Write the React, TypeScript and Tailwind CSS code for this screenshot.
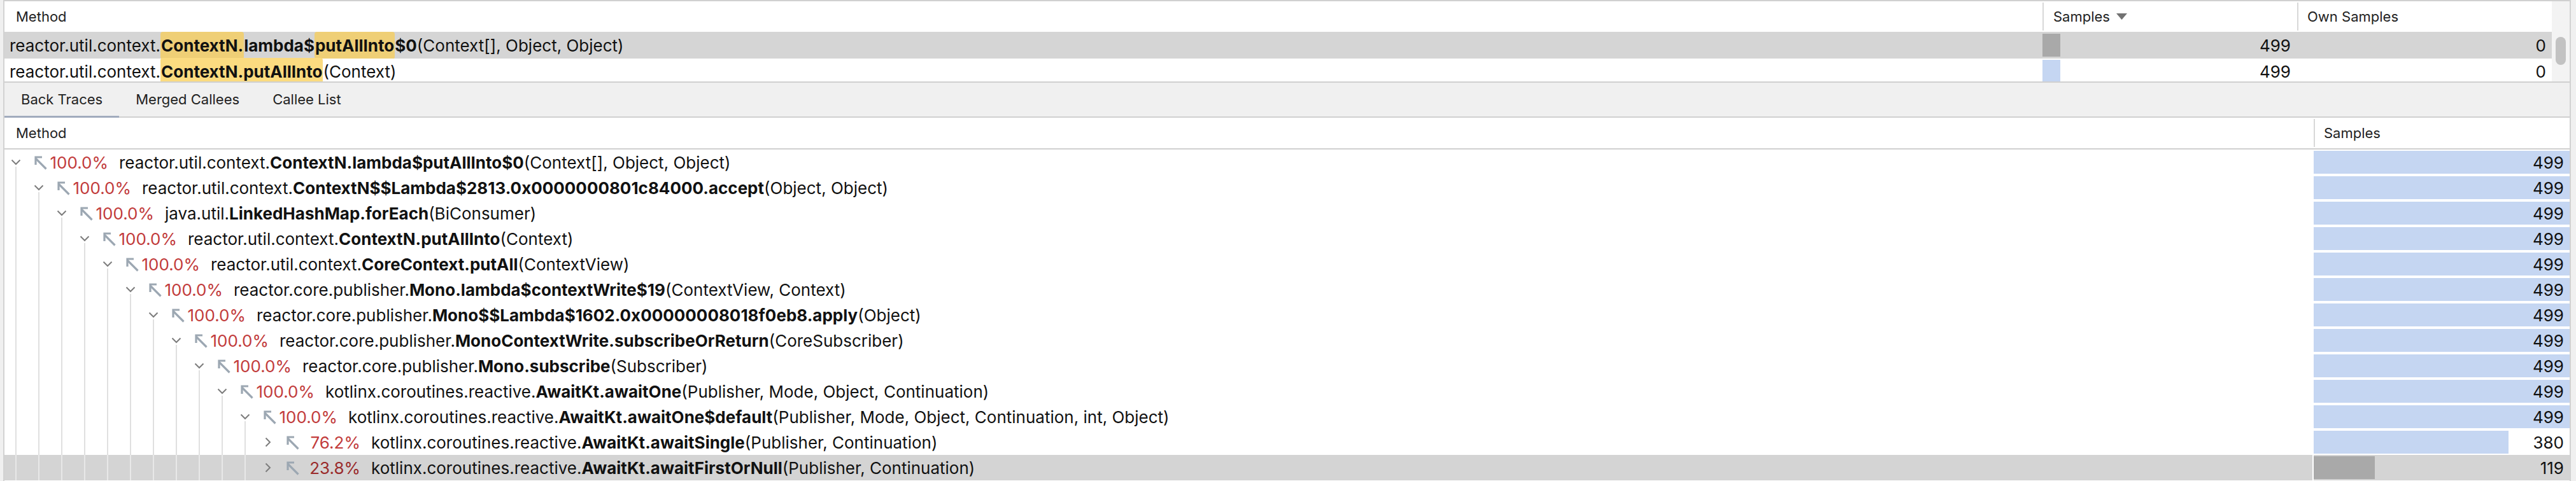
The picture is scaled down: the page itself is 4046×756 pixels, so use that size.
import React from "react";

type TraceRow = {
  level: number;
  expanded: boolean;
  pct: string;
  pkg: string;
  method: string;
  args: string;
  samples: number;
  selected?: boolean;
};

const TOTAL = 499;

const traces: TraceRow[] = [
  { level: 0, expanded: true, pct: "100.0%", pkg: "reactor.util.context.", method: "ContextN.lambda$putAllInto$0", args: "(Context[], Object, Object)", samples: 499 },
  { level: 1, expanded: true, pct: "100.0%", pkg: "reactor.util.context.", method: "ContextN$$Lambda$2813.0x0000000801c84000.accept", args: "(Object, Object)", samples: 499 },
  { level: 2, expanded: true, pct: "100.0%", pkg: "java.util.", method: "LinkedHashMap.forEach", args: "(BiConsumer)", samples: 499 },
  { level: 3, expanded: true, pct: "100.0%", pkg: "reactor.util.context.", method: "ContextN.putAllInto", args: "(Context)", samples: 499 },
  { level: 4, expanded: true, pct: "100.0%", pkg: "reactor.util.context.", method: "CoreContext.putAll", args: "(ContextView)", samples: 499 },
  { level: 5, expanded: true, pct: "100.0%", pkg: "reactor.core.publisher.", method: "Mono.lambda$contextWrite$19", args: "(ContextView, Context)", samples: 499 },
  { level: 6, expanded: true, pct: "100.0%", pkg: "reactor.core.publisher.", method: "Mono$$Lambda$1602.0x00000008018f0eb8.apply", args: "(Object)", samples: 499 },
  { level: 7, expanded: true, pct: "100.0%", pkg: "reactor.core.publisher.", method: "MonoContextWrite.subscribeOrReturn", args: "(CoreSubscriber)", samples: 499 },
  { level: 8, expanded: true, pct: "100.0%", pkg: "reactor.core.publisher.", method: "Mono.subscribe", args: "(Subscriber)", samples: 499 },
  { level: 9, expanded: true, pct: "100.0%", pkg: "kotlinx.coroutines.reactive.", method: "AwaitKt.awaitOne", args: "(Publisher, Mode, Object, Continuation)", samples: 499 },
  { level: 10, expanded: true, pct: "100.0%", pkg: "kotlinx.coroutines.reactive.", method: "AwaitKt.awaitOne$default", args: "(Publisher, Mode, Object, Continuation, int, Object)", samples: 499 },
  { level: 11, expanded: false, pct: "76.2%", pkg: "kotlinx.coroutines.reactive.", method: "AwaitKt.awaitSingle", args: "(Publisher, Continuation)", samples: 380 },
  { level: 11, expanded: false, pct: "23.8%", pkg: "kotlinx.coroutines.reactive.", method: "AwaitKt.awaitFirstOrNull", args: "(Publisher, Continuation)", samples: 119, selected: true },
];

function Chevron({ expanded }: { expanded: boolean }) {
  if (expanded) {
    return (
      <svg width="16" height="10" viewBox="0 0 16 10">
        <path d="M1.5 1.5 L8 8 L14.5 1.5" fill="none" stroke="#7d7d7d" strokeWidth="2" />
      </svg>
    );
  }
  return (
    <svg width="10" height="16" viewBox="0 0 10 16">
      <path d="M1.5 1.5 L8 8 L1.5 14.5" fill="none" stroke="#7d7d7d" strokeWidth="2" />
    </svg>
  );
}

function BackArrow() {
  return (
    <svg width="21" height="23" viewBox="0 0 21 23">
      <path d="M19.5 21.5 L3.5 5.5" fill="none" stroke="#9ca7b2" strokeWidth="3.2" />
      <path d="M3 15 V3 H13" fill="none" stroke="#9ca7b2" strokeWidth="3.2" />
    </svg>
  );
}

function TreeRow({ row }: { row: TraceRow }) {
  const guides = Array.from({ length: row.level });
  return (
    <div className={`flex h-[40px] ${row.selected ? "bg-[#d4d4d4]" : "bg-white"}`}>
      <div className="flex flex-1 items-stretch min-w-0">
        {guides.map((_, i) => (
          <div key={i} className="w-[36px] shrink-0 flex justify-center">
            <div className={`w-[2px] h-full ${row.selected ? "bg-[#e8e8e8]" : "bg-[#e0e0e0]"}`} />
          </div>
        ))}
        <div className="w-[36px] shrink-0 flex flex-col items-center">
          <div className="flex-1" />
          <Chevron expanded={row.expanded} />
          <div className="flex-1 flex justify-center">
            {row.expanded && <div className="w-[2px] h-[13px] mt-[auto] bg-[#e0e0e0]" />}
          </div>
        </div>
        <div className="ml-[10px] flex items-center">
          <BackArrow />
        </div>
        <div
          className={`w-[96px] shrink-0 flex items-center justify-end text-[26px] ${
            row.selected ? "text-[#9a2b2b]" : "text-[#c23b3b]"
          }`}
        >
          {row.pct}
        </div>
        <div className="ml-[17px] flex items-center whitespace-nowrap text-[26px] text-[#111]">
          <span>{row.pkg}</span>
          <span className="font-bold">{row.method}</span>
          <span>{row.args}</span>
        </div>
      </div>
      <div className="relative w-[404px] shrink-0 border-l-2 border-white flex items-center justify-end pr-[9px]">
        <div
          className={`absolute left-0 top-[2px] bottom-[2px] ${row.selected ? "bg-[#a9a9a9]" : "bg-[#c5d6f2]"}`}
          style={{ width: `${(402 * row.samples) / TOTAL}px` }}
        />
        <span className="relative text-[26px] text-[#111]">{row.samples}</span>
      </div>
    </div>
  );
}

export default function App() {
  return (
    <div className="w-[4046px] h-[756px] overflow-hidden bg-[#f0f0f0] pl-[5px] pr-[8px] font-['Inter',sans-serif]">
      <div className="h-full flex flex-col border-x-2 border-[#d2d2d2] bg-white">
        {/* top method table */}
        <div className="h-[130px] shrink-0 flex border-t-2 border-b-2 border-[#d0d0d0] overflow-hidden">
          <div className="flex-1 flex flex-col min-w-0">
            <div className="h-[48px] shrink-0 flex items-stretch text-[22px] text-[#222]">
              <div className="flex-1 flex items-center pl-[18px]">Method</div>
              <div className="w-[400px] flex items-center">
                <div className="w-[2px] h-[44px] bg-[#d8d8d8]" />
                <span className="ml-[15px]">Samples</span>
                <svg className="ml-[10px]" width="17" height="10" viewBox="0 0 17 10">
                  <polygon points="0,0 17,0 8.5,10" fill="#727272" />
                </svg>
              </div>
              <div className="w-[400px] flex items-center">
                <div className="w-[2px] h-[44px] bg-[#d8d8d8]" />
                <span className="ml-[14px]">Own Samples</span>
              </div>
            </div>
            <div className="h-[42px] shrink-0 flex bg-[#d5d5d5] text-[26px] text-[#111]">
              <div className="flex-1 flex items-center pl-[8px] whitespace-nowrap">
                <span>reactor.util.context.</span>
                <span className="font-bold bg-[#efcf76] rounded-[4px] px-[1px] py-[2px]">ContextN.</span>
                <span className="font-bold">lambda$</span>
                <span className="font-bold bg-[#efcf76] rounded-[4px] px-[1px] py-[2px]">putAllInto</span>
                <span className="font-bold">$0</span>
                <span>(Context[], Object, Object)</span>
              </div>
              <div className="w-[400px] flex items-center">
                <div className="w-[28px] h-[36px] bg-[#a9a9a9]" />
                <span className="flex-1 text-right pr-[10px]">499</span>
              </div>
              <div className="w-[400px] flex items-center justify-end pr-[9px]">0</div>
            </div>
            <div className="h-[40px] shrink-0 flex bg-white text-[26px] text-[#111]">
              <div className="flex-1 flex items-center pl-[8px] whitespace-nowrap">
                <span>reactor.util.context.</span>
                <span className="font-bold bg-[#fbdb80] rounded-[4px] px-[1px] py-[2px]">ContextN.putAllInto</span>
                <span>(Context)</span>
              </div>
              <div className="w-[400px] flex items-center">
                <div className="w-[28px] h-[36px] bg-[#c5d6f2]" />
                <span className="flex-1 text-right pr-[10px]">499</span>
              </div>
              <div className="w-[400px] flex items-center justify-end pr-[9px]">0</div>
            </div>
          </div>
          <div className="w-[28px] shrink-0 bg-[#f3f3f3] flex justify-center pt-[56px]">
            <div className="w-[16px] h-[44px] rounded-full bg-[#c2c2c2]" />
          </div>
        </div>

        {/* tabs */}
        <div className="h-[55px] shrink-0 flex bg-[#f0f0f0] text-[22px] text-[#222]">
          <div className="flex items-center px-[26px] border-b-[3px] border-[#a1abbd]">Back Traces</div>
          <div className="flex items-center px-[26px] border-b-2 border-[#d0d0d0]">Merged Callees</div>
          <div className="flex items-center px-[26px] border-b-2 border-[#d0d0d0]">Callee List</div>
          <div className="flex-1 border-b-2 border-[#d0d0d0]" />
        </div>

        {/* back traces tree table */}
        <div className="h-[50px] shrink-0 flex border-b-2 border-[#d0d0d0] text-[22px] text-[#222]">
          <div className="flex-1 flex items-center pl-[18px]">Method</div>
          <div className="w-[404px] flex items-center pl-[2px]">
            <div className="w-[2px] h-[44px] bg-[#d8d8d8]" />
            <span className="ml-[14px]">Samples</span>
          </div>
        </div>
        <div className="flex-1 flex flex-col overflow-hidden">
          {traces.map((row, i) => (
            <TreeRow key={i} row={row} />
          ))}
        </div>
      </div>
    </div>
  );
}
